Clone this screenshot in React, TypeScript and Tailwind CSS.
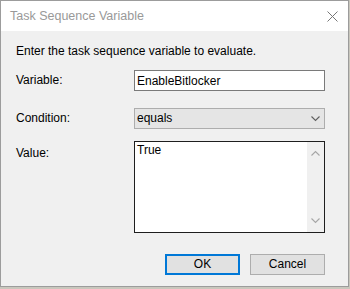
import React from 'react';

const font = { fontFamily: '"Liberation Sans", Arial, sans-serif' };

function Chevron({ up = false, color = '#606060' }: { up?: boolean; color?: string }) {
  return (
    <svg width="9" height="6" viewBox="0 0 9 6" className="block">
      <path
        d={up ? 'M0.5 5.5 L4.5 1.5 L8.5 5.5' : 'M0.5 0.5 L4.5 4.5 L8.5 0.5'}
        fill="none"
        stroke={color}
        strokeWidth="1.1"
      />
    </svg>
  );
}

export default function App() {
  return (
    <div className="h-[289px] w-[350px] bg-[#c9c7bd]" style={font}>
      <div className="flex h-[287px] w-[349px] flex-col border border-[#9c9c9c] bg-[#f0f0f0] text-[12px] leading-[15px] text-black">
        {/* title bar */}
        <div className="flex h-[30px] shrink-0 items-center justify-between bg-white pl-[9px] pr-[9px]">
          <span className="text-[12.5px] text-[#999999]">Task Sequence Variable</span>
          <svg width="11" height="11" viewBox="0 0 11 11" className="mr-[1px]">
            <path d="M0.5 0.5 L10.5 10.5 M10.5 0.5 L0.5 10.5" stroke="#777" strokeWidth="1" />
          </svg>
        </div>

        <div className="flex flex-1 flex-col pl-[15px]">
          <p className="mt-[13px]">Enter the task sequence variable to evaluate.</p>

          <div className="mt-[11px] flex h-[21px] items-center">
            <label className="w-[118px]">Variable:</label>
            <input
              readOnly
              value="EnableBitlocker"
              className="h-[21px] w-[191px] border border-[#7a7a7a] bg-white px-[2px] text-[12px] outline-none"
              style={font}
            />
          </div>

          <div className="mt-[17px] flex h-[21px] items-center">
            <span className="w-[118px]">Condition:</span>
            <div className="flex h-[21px] w-[191px] items-center justify-between border border-[#adadad] bg-[#e5e5e5] pl-[2px] pr-[4px]">
              <span>equals</span>
              <Chevron />
            </div>
          </div>

          <div className="mt-[12px] flex">
            <span className="mt-[5px] w-[118px]">Value:</span>
            <div className="flex h-[92px] w-[191px] border border-[#1e1e1e] bg-white">
              <div className="flex-1 pl-[2px] pt-[1px]">True</div>
              <div className="flex w-[17px] flex-col items-center justify-between bg-[#f0f0f0] py-[8px]">
                <Chevron up color="#a6a6a6" />
                <Chevron color="#a6a6a6" />
              </div>
            </div>
          </div>

          <div className="mt-[21px] flex w-[309px] justify-end gap-[10px]">
            <button className="h-[21px] w-[75px] border-2 border-[#0078d7] bg-[#e1e1e1]" style={font}>
              OK
            </button>
            <button className="h-[21px] w-[75px] border border-[#adadad] bg-[#e1e1e1]" style={font}>
              Cancel
            </button>
          </div>
        </div>
      </div>
    </div>
  );
}
